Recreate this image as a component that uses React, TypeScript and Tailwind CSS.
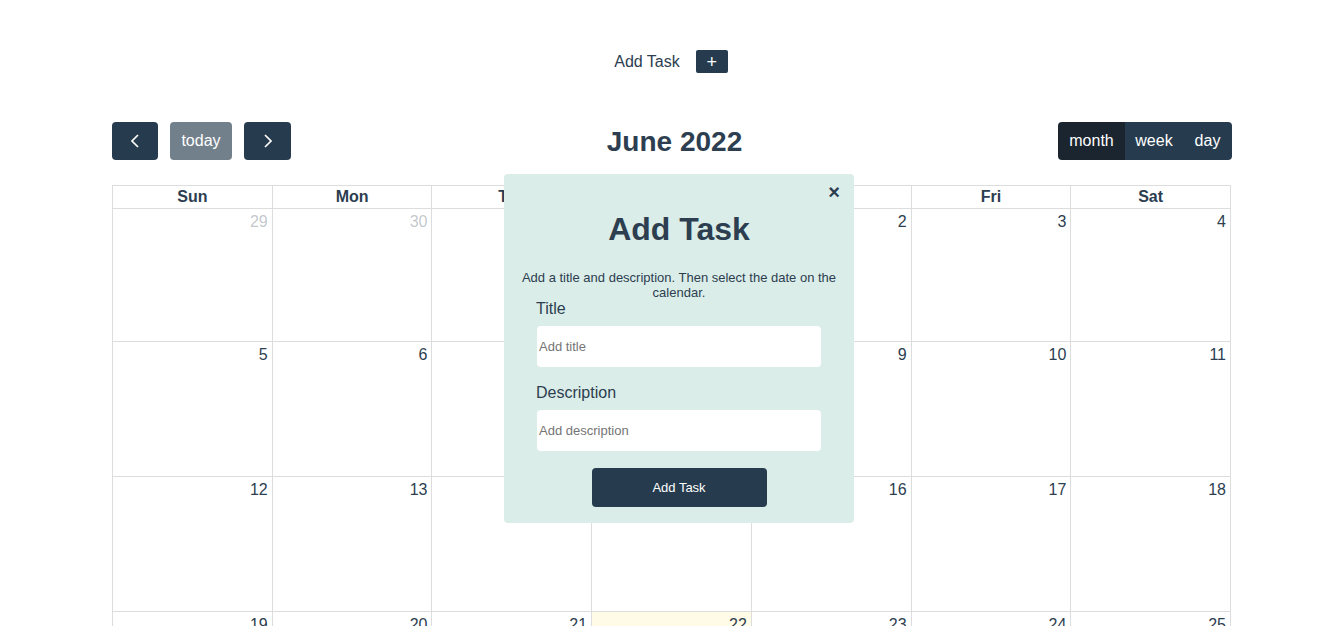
import { useState } from 'react';

const weekdays = ['Sun', 'Mon', 'Tue', 'Wed', 'Thu', 'Fri', 'Sat'];

// June 2022 month grid, starting on Sun 29 May
const weeks = [
  [29, 30, 31, 1, 2, 3, 4],
  [5, 6, 7, 8, 9, 10, 11],
  [12, 13, 14, 15, 16, 17, 18],
  [19, 20, 21, 22, 23, 24, 25],
  [26, 27, 28, 29, 30, 1, 2],
];

function Chevron({ dir }: { dir: 'left' | 'right' }) {
  return (
    <svg width="16" height="16" viewBox="0 0 16 16" fill="none" stroke="currentColor" strokeWidth="1.7" strokeLinejoin="miter">
      {dir === 'left' ? <path d="M11 2 L5 8 L11 14" /> : <path d="M5 2 L11 8 L5 14" />}
    </svg>
  );
}

function DayCell({ day, outside, today, first }: { day: number; outside: boolean; today: boolean; first: boolean }) {
  return (
    <div
      className={`border-r border-b border-[#ddd] ${today ? 'bg-[#fffbe6]' : 'bg-white'} ${first ? 'h-[133px]' : 'h-[135px]'} pr-[4px] pt-[4px] text-right text-[16px] leading-[18px] ${outside ? 'text-[#2c3e50]/30' : 'text-[#2c3e50]'}`}
    >
      {day}
    </div>
  );
}

export default function App() {
  const [view, setView] = useState('month');
  const [open, setOpen] = useState(true);

  return (
    <div className="relative min-h-screen bg-white text-[#2c3e50] font-['Liberation_Sans',Arial,sans-serif] pt-[50px]">
      {/* add task trigger */}
      <div className="flex items-center justify-center gap-[16px] h-[23px] pl-[11px]">
        <span className="text-[16px]">Add Task</span>
        <button onClick={() => setOpen(true)} className="w-[32px] h-[23px] rounded-[2px] bg-[#263c4e] text-white text-[18px] leading-none flex items-center justify-center">
          +
        </button>
      </div>

      <div className="w-[1119px] ml-[112px] mt-[49px]">
        {/* toolbar */}
        <div className="flex items-center justify-between h-[38px] mb-[25px]">
          <div className="flex items-center gap-[12px]">
            <button className="w-[46px] h-[38px] rounded-[4px] bg-[#263c4e] text-white flex items-center justify-center">
              <Chevron dir="left" />
            </button>
            <button className="w-[62px] h-[38px] rounded-[4px] bg-[#263c4e]/65 text-white text-[16px]">today</button>
            <button className="w-[47px] h-[38px] rounded-[4px] bg-[#263c4e] text-white flex items-center justify-center">
              <Chevron dir="right" />
            </button>
          </div>
          <h2 className="text-[28px] font-bold leading-none pt-[2px]">June 2022</h2>
          <div className="flex h-[38px] rounded-[4px] overflow-hidden text-white text-[16px] mr-[-1px]">
            {['month', 'week', 'day'].map(v => (
              <button
                key={v}
                onClick={() => setView(v)}
                className={`${v === 'month' ? 'w-[67px]' : v === 'week' ? 'w-[58px]' : 'w-[49px]'} ${view === v ? 'bg-[#1a252f]' : 'bg-[#263c4e]'}`}
              >
                {v}
              </button>
            ))}
          </div>
        </div>

        {/* month grid */}
        <div className="grid grid-cols-7 border-l border-t border-[#ddd]">
          {weekdays.map(d => (
            <div key={d} className="border-r border-b border-[#ddd] h-[23px] text-center font-bold text-[16px] leading-[22px]">
              {d}
            </div>
          ))}
          {weeks.map((w, wi) =>
            w.map((d, di) => (
              <DayCell
                key={`${wi}-${di}`}
                day={d}
                first={wi === 0}
                outside={(wi === 0 && d > 20) || (wi === 4 && d < 10)}
                today={wi === 3 && d === 22}
              />
            ))
          )}
        </div>
      </div>

      {/* Add task modal */}
      {open && (
        <div className="absolute left-[504px] top-[174px] w-[350px] h-[349px] rounded-[4px] bg-[#dbede8] flex flex-col items-center">
          <button onClick={() => setOpen(false)} className="absolute right-[14px] top-[8px] text-[20px] font-bold leading-none">
            ×
          </button>
          <h1 className="mt-[37px] text-[32px] font-bold leading-[37px]">Add Task</h1>
          <p className="mt-[22px] px-[16px] text-center text-[13px] leading-[15px]">
            Add a title and description. Then select the date on the calendar.
          </p>
          <div className="w-full px-[32px] flex flex-col">
            <label className="text-[16px] leading-[18px]">Title</label>
            <input className="mt-[8px] ml-px w-[284px] h-[41px] rounded-[4px] bg-white pl-[2px] text-[13px] outline-none placeholder:text-[#757575]" placeholder="Add title" />
            <label className="mt-[17px] text-[16px] leading-[18px]">Description</label>
            <input className="mt-[8px] ml-px w-[284px] h-[41px] rounded-[4px] bg-white pl-[2px] text-[13px] outline-none placeholder:text-[#757575]" placeholder="Add description" />
          </div>
          <button className="mt-[17px] w-[175px] h-[39px] rounded-[4px] bg-[#263c4e] text-white text-[13px]">Add Task</button>
        </div>
      )}
    </div>
  );
}
